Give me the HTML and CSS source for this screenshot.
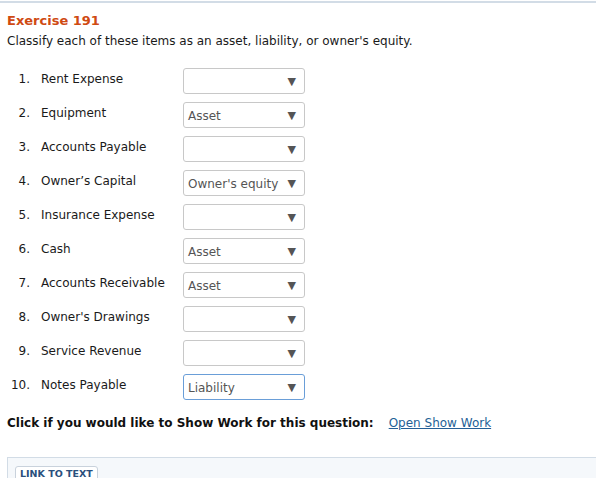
FILE: index.html
```html
<!DOCTYPE html>
<html>
<head>
<meta charset="utf-8">
<link rel="stylesheet" href="styles.css">
</head>
<body>
<div class="topline"></div>
<div class="content">
  <h1 class="title">Exercise 191</h1>
  <p class="intro">Classify each of these items as an asset, liability, or owner's equity.</p>
  <ol class="items">
    <li class="row"><span class="num">1.</span><span class="label">Rent Expense</span><div class="sel"><span class="val"></span><span class="arr">▼</span></div></li>
    <li class="row"><span class="num">2.</span><span class="label">Equipment</span><div class="sel"><span class="val">Asset</span><span class="arr">▼</span></div></li>
    <li class="row"><span class="num">3.</span><span class="label">Accounts Payable</span><div class="sel"><span class="val"></span><span class="arr">▼</span></div></li>
    <li class="row"><span class="num">4.</span><span class="label">Owner’s Capital</span><div class="sel"><span class="val">Owner's equity</span><span class="arr">▼</span></div></li>
    <li class="row"><span class="num">5.</span><span class="label">Insurance Expense</span><div class="sel"><span class="val"></span><span class="arr">▼</span></div></li>
    <li class="row"><span class="num">6.</span><span class="label">Cash</span><div class="sel"><span class="val">Asset</span><span class="arr">▼</span></div></li>
    <li class="row"><span class="num">7.</span><span class="label">Accounts Receivable</span><div class="sel"><span class="val">Asset</span><span class="arr">▼</span></div></li>
    <li class="row"><span class="num">8.</span><span class="label">Owner's Drawings</span><div class="sel"><span class="val"></span><span class="arr">▼</span></div></li>
    <li class="row"><span class="num">9.</span><span class="label">Service Revenue</span><div class="sel"><span class="val"></span><span class="arr">▼</span></div></li>
    <li class="row"><span class="num">10.</span><span class="label">Notes Payable</span><div class="sel focus"><span class="val">Liability</span><span class="arr">▼</span></div></li>
  </ol>
  <div class="showwork"><span class="sw-text">Click if you would like to Show Work for this question:</span><a class="sw-link" href="#">Open Show Work</a></div>
  <div class="panel"><span class="btn">LINK TO TEXT</span></div>
</div>
</body>
</html>
```
FILE: styles.css
```css
html, body {
  margin: 0;
  padding: 0;
  background: #fff;
  overflow: hidden;
}
body {
  font-family: "DejaVu Sans", Verdana, sans-serif;
  font-size: 12px;
  color: #1a1a1a;
  width: 596px;
  height: 478px;
}
.topline {
  height: 2px;
  margin-top: 1px;
  background: #d2dce6;
}
.content {
  padding-left: 7px;
}
.title {
  margin: 10px 0 0 0;
  font-size: 13px;
  font-weight: bold;
  color: #cf4a12;
  line-height: 16px;
}
.intro {
  margin: 4px 0 0 0;
  line-height: 16px;
}
.items {
  list-style: none;
  margin: 19px 0 0 0;
  padding: 0;
}
.row {
  display: flex;
  align-items: flex-start;
  height: 26px;
  margin-bottom: 8px;
}
.num {
  width: 23px;
  text-align: right;
  line-height: 16px;
  padding-top: 3px;
}
.label {
  width: 142px;
  margin-left: 11px;
  line-height: 16px;
  padding-top: 3px;
}
.sel {
  box-sizing: border-box;
  width: 122px;
  height: 26px;
  border: 1px solid #c8c8c8;
  border-radius: 3px;
  display: flex;
  align-items: center;
  justify-content: space-between;
  padding: 0 8px 0 4px;
  background: #fff;
  color: #555;
}
.sel.focus {
  border-color: #6a9ed8;
}
.val {
  padding-top: 1px;
}
.arr {
  font-size: 11px;
  color: #555;
  padding-top: 1px;
}
.showwork {
  margin-top: 15px;
  display: flex;
  line-height: 16px;
}
.sw-text {
  font-weight: bold;
  color: #111;
}
.sw-link {
  margin-left: 15px;
  color: #245f96;
  text-decoration: underline;
}
.panel {
  margin-top: 26px;
  border: 1px solid #d2dce6;
  border-right: none;
  background: #f5f8fb;
  height: 40px;
  padding: 8px 0 0 7px;
  box-sizing: border-box;
}
.btn {
  display: inline-block;
  border: 1px solid #c9d2dc;
  border-radius: 3px;
  background: #fff;
  font-size: 9.5px;
  font-weight: bold;
  color: #2a4f7c;
  padding: 1px 4px 3px 4px;
  line-height: 12px;
}
```
